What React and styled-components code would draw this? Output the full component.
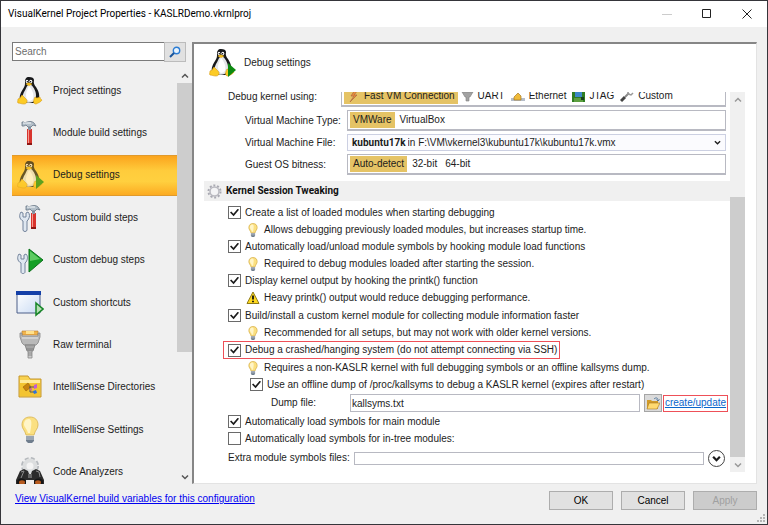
import React from 'react';
import styled, { createGlobalStyle } from 'styled-components';

const GlobalStyle = createGlobalStyle`
  * {
    box-sizing: border-box;
  }
  body {
    margin: 0;
    font-family: 'Liberation Sans', Arial, sans-serif;
    font-size: 10px;
    line-height: 12px;
    color: #1c1c1c;
  }
  button, input, select {
    font: inherit;
    color: inherit;
    padding: 0;
    margin: 0;
  }
`;

const Window = styled.div`
  position: relative;
  display: flex;
  flex-direction: column;
  height: 100vh;
  background: #f0f0f0;
  border: 1px solid #35353a;
`;

const TitleBar = styled.header`
  display: flex;
  align-items: center;
  justify-content: space-between;
  flex: none;
  height: 26px;
  padding-left: 7px;
  background: #fff;
`;

const Title = styled.h1`
  margin: 0;
  font-family: Roboto, 'Noto Sans', sans-serif;
  font-size: 10px;
  line-height: 16px;
  font-weight: 400;
  color: #000;
  white-space: nowrap;
`;

const TitleButtons = styled.div`
  display: flex;
`;

const TitleButton = styled.button`
  display: flex;
  align-items: center;
  justify-content: center;
  width: 40px;
  height: 26px;
  border: 0;
  background: none;
  color: ${props => (props.disabled ? '#ccc' : '#222')};
`;

const Main = styled.div`
  display: flex;
  flex: 1;
  min-height: 0;
  padding: 15px 10px 0 11px;
`;

const Sidebar = styled.aside`
  display: flex;
  flex-direction: column;
  flex: none;
  width: 180px;
`;

const SearchForm = styled.form`
  display: flex;
  flex: none;
  height: 20px;
  margin: 0 6px 6px 0;
`;

const SearchInput = styled.input`
  flex: 1;
  min-width: 0;
  height: 19px;
  padding: 0 2px;
  border: 1px solid #7a7a7a;
  border-right: 0;
  background: #fff;
  &::placeholder {
    color: #6d6d6d;
    opacity: 1;
  }
`;

const SearchButton = styled.button`
  display: flex;
  align-items: center;
  justify-content: center;
  width: 22px;
  height: 20px;
  border: 1px solid #bcbcbc;
  background: #e1e1e1;
`;

const NavArea = styled.div`
  display: flex;
  flex: 1;
  min-height: 0;
`;

const Nav = styled.nav`
  flex: 1;
  overflow: hidden;
`;

const NavList = styled.ul`
  display: grid;
  grid-auto-rows: 1fr;
  min-height: 426px;
  margin: 0;
  padding: 2px 0 0;
  list-style: none;
`;

const NavLink = styled.a`
  display: flex;
  align-items: center;
  gap: 9px;
  height: 41px;
  padding-left: 4px;
  color: inherit;
  text-decoration: none;
  border: 1px solid transparent;
  border-width: 1px 0;
  ${props =>
    props.$active &&
    `
    border-color: #e09a2c;
    background: linear-gradient(#fba41d 0%, #ffcc3c 38%, #ffd03f 65%, #fcab22 100%);
  `}
  svg {
    opacity: ${props => (props.$active ? 0.65 : 1)};
  }
`;

const ScrollBar = styled.div`
  display: flex;
  flex-direction: column;
  flex: none;
  width: ${props => props.$width}px;
  background: #f0f0f0;
`;

const ScrollButton = styled.button`
  display: flex;
  align-items: center;
  justify-content: center;
  flex: none;
  height: 15px;
  border: 0;
  background: none;
  color: ${props => (props.$faint ? '#999' : '#555')};
`;

const ScrollTrack = styled.div`
  display: flex;
  flex-direction: column;
  flex: 1;
`;

const ScrollSpace = styled.div`
  flex: ${props => props.$size};
`;

const ScrollThumb = styled.div`
  flex: ${props => props.$size};
  background: #cdcdcd;
`;

const Panel = styled.main`
  display: flex;
  flex-direction: column;
  flex: 1;
  min-width: 0;
  padding: 3px 11px 11px 10px;
  background: #fff;
  border: 2px solid #868686;
  border-right: 1px solid #e3e3e3;
  border-bottom: 1px solid #e3e3e3;
`;

const PanelHeader = styled.div`
  display: flex;
  align-items: center;
  gap: 8px;
  flex: none;
  height: 45px;
  padding: 0 0 13px 4px;
`;

const PanelTitle = styled.h2`
  margin: 0;
  font-size: 10px;
  font-weight: 400;
`;

const PanelBody = styled.div`
  display: flex;
  flex: 1;
  min-height: 0;
`;

const Viewport = styled.div`
  flex: 1;
  min-width: 0;
  overflow: hidden;
`;

// content is scrolled a few pixels down
const Scrolled = styled.div`
  margin-top: -6px;
`;

const Settings = styled.div`
  display: flex;
  flex-direction: column;
  gap: 3px;
  padding: 0 4px 6px 24px;
`;

const Field = styled.div`
  display: grid;
  grid-template-columns: ${props => props.$label}px 1fr;
  align-items: center;
  margin-left: ${props => props.$indent || 0}px;
`;

const Choices = styled.div`
  display: flex;
  align-items: center;
  gap: ${props => (props.$icons ? 0 : 2)}px;
  height: 21px;
  padding: 0 2px;
  border: 1px solid #b8b9c2;
  border-width: 1px 1px 2px;
`;

const Choice = styled.label`
  display: flex;
  align-items: center;
  gap: 4px;
  height: 16px;
  padding: 0 3px;
  background: ${props => (props.$on ? '#e5c365' : 'none')};
  white-space: nowrap;
`;

const ChoiceInput = styled.input`
  appearance: none;
  position: absolute;
`;

const Combo = styled.div`
  display: flex;
  align-items: center;
  height: 17px;
  padding: 0 4px;
  background: #fbfbfe;
  border: 1px solid #ccd0e2;
`;

const ComboName = styled.label`
  flex: none;
  font-family: Roboto, Arial, sans-serif;
  font-weight: 700;
`;

const ComboSelect = styled.select`
  appearance: none;
  flex: 1;
  min-width: 0;
  height: 14px;
  padding-left: 2px;
  border: 0;
  background: none;
`;

const SectionHeader = styled.h3`
  display: flex;
  align-items: center;
  gap: 4px;
  height: 20px;
  margin: 0;
  padding-left: 3px;
  background: #f0f0f0;
  font-family: Roboto, Arial, sans-serif;
  font-size: 10px;
  font-weight: 700;
  color: #111;
`;

const Options = styled.div`
  display: flex;
  flex-direction: column;
  align-items: stretch;
  padding: 3px 2px 0 24px;
`;

const CheckLabel = styled.label`
  display: flex;
  align-items: center;
  align-self: flex-start;
  gap: 4px;
  height: ${props => (props.$marked ? 18 : 17)}px;
  margin-left: ${props => (props.$nested ? 22 : 0)}px;
  white-space: nowrap;
  ${props =>
    props.$marked &&
    `
    margin-left: -5px;
    padding: 0 2px 0 4px;
    border: 1px solid #ee5058;
  `}
`;

const Check = styled.input`
  appearance: none;
  display: grid;
  place-items: center;
  flex: none;
  width: 13px;
  height: 13px;
  border: 1px solid #6a6a6a;
  background: #fff;
  &:checked::before {
    content: '';
    width: 9px;
    height: 8px;
    background: #1c1c1c;
    clip-path: polygon(0 50%, 14% 38%, 38% 66%, 86% 4%, 100% 16%, 40% 96%);
  }
`;

const Hint = styled.p`
  display: flex;
  align-items: center;
  gap: 4px;
  height: ${props => (props.$warn ? 18 : 17)}px;
  margin: 0 0 0 18px;
  white-space: nowrap;
`;

const DumpRow = styled.div`
  display: grid;
  grid-template-columns: 79px 1fr 18px 66px;
  align-items: center;
  height: 20px;
  margin-left: 43px;
`;

const ExtraRow = styled.div`
  display: grid;
  grid-template-columns: 126px 1fr 17px;
  align-items: center;
  height: 22px;
  padding-right: 3px;
`;

const TextInput = styled.input`
  min-width: 0;
  height: ${props => (props.$slim ? 13 : 18)}px;
  margin-right: 4px;
  padding: 0 1px;
  border: 1px solid #b8b9c2;
  background: #fff;
`;

const BrowseButton = styled.button`
  display: flex;
  align-items: center;
  justify-content: center;
  height: 18px;
  border: 1px solid #a5a5a5;
  background: #dadada;
`;

const UpdateLink = styled.a`
  height: 17px;
  margin-left: 1px;
  border: 1px solid #ee5058;
  line-height: 14px;
  text-align: center;
  color: #0a66cc;
`;

const ExpandButton = styled.button`
  display: flex;
  align-items: center;
  justify-content: center;
  width: 17px;
  height: 17px;
  border: 1px solid #444;
  border-radius: 50%;
  background: #fff;
`;

const Footer = styled.footer`
  display: flex;
  align-items: flex-start;
  justify-content: space-between;
  flex: none;
  height: 40px;
  padding: 7px 10px 0 14px;
`;

const VariablesLink = styled.a`
  margin-top: 2px;
  color: #0000f0;
`;

const Buttons = styled.div`
  display: flex;
  gap: 8px;
`;

const DialogButton = styled.button`
  width: 64px;
  height: 19px;
  border: 1px solid #adadad;
  background: ${props => (props.disabled ? '#ccc' : '#e1e1e1')};
  color: ${props => (props.disabled ? '#a0a0a0' : '#000')};
`;

const Grip = styled.svg`
  position: absolute;
  right: 1px;
  bottom: 1px;
`;

const Tux = ({ play }) => (
  <svg width="28" height="30" viewBox="0 0 28 30">
    <path d="M13 1c-3 0-4 2-4 5 0 3 0 4-2 7-2 3-4 7-3 11l6 3h8l5-4c1-5-1-9-3-12-3-4-2-5-2-7 0-2-2-3-5-3z" fill="#17181a" />
    <path d="M12 9c-2 2-2 4-4 7-2 4-2 7 0 9 3 3 9 2 11-1 2-4 1-9-2-13-1-2-3-3-5-2z" fill="#e4e6e9" />
    <path d="M13 10c-1 3-3 5-3 9 0 3 1 5 3 6 4 0 5-3 4-8-1-3-2-5-4-7z" fill="#fff" />
    <ellipse cx="11" cy="5.500" rx="1.300" ry="1.700" fill="#fff" />
    <ellipse cx="14.800" cy="5.500" rx="1.500" ry="1.800" fill="#fff" />
    <circle cx="11.300" cy="5.800" r=".7" />
    <circle cx="14.600" cy="5.800" r=".7" />
    <path d="M9.500 8l3-1.500 4 1.400-3.500 2z" fill="#f0b91c" />
    <path d="M6 19l4 4c2 2 1 5-2 5-3 0-4-1-6-1-1-1 0-2 0-4 1-1 2 0 2-1z" fill="#fccb25" stroke="#d99a12" strokeWidth=".6" />
    <path d="M19 21c2 2 4 0 5 0 0 2 1 2 2 3-1 2-4 3-6 4-3 0-3-3-1-7z" fill="#fccb25" stroke="#d99a12" strokeWidth=".6" />
    {play && <path d="M20 15l8 7-8 7z" fill="#0c8a10" />}
  </svg>
);

const Hammer = () => (
  <g>
    <path d="M13 11h5v15h-5z" fill="#d8342d" />
    <path d="M14 11h1v15h-1z" fill="#f59a8f" />
    <path d="M13 25h5v2h-5z" fill="#8c1713" />
    <path d="M14 7h3v5h-3z" fill="#8b98a5" />
    <path d="M8 4h2l1 1c3-2 7-2 9 0l2 3-3-1-2 2h-3l-2-2-2 1H8z" fill="#b4c0ca" stroke="#657483" strokeWidth=".8" />
    <path d="M9 5h8" stroke="#f5f8fa" />
  </g>
);

const Wrench = () => (
  <path
    d="M4 8l2 1v4h3V9l2-1c2 2 2 5 0 8l-1 1v9c0 2-4 2-4 0v-9c-4-2-4-6-2-9z"
    fill="#dfe7f0"
    stroke="#73839b"
    strokeWidth="1"
  />
);

const ModuleIcon = () => (
  <svg width="28" height="30" viewBox="0 0 28 30">
    <g transform="translate(-2 0)"><Hammer /></g>
  </svg>
);

const BuildIcon = () => (
  <svg width="28" height="30" viewBox="0 0 28 30">
    <g transform="translate(2 -1)"><Hammer /></g>
    <g transform="translate(1 1)"><Wrench /></g>
  </svg>
);

const StepsIcon = () => (
  <svg width="28" height="30" viewBox="0 0 28 30">
    <g transform="translate(-1 1)"><Wrench /></g>
    <path d="M13 4l14 11-14 12z" fill="#14a026" stroke="#0b701b" />
    <path d="M14 6l10 8-10 2z" fill="#5ecb62" />
  </svg>
);

const ShortcutIcon = () => (
  <svg width="28" height="30" viewBox="0 0 28 30">
    <defs>
      <linearGradient id="win" x2="1" y2="1">
        <stop stopColor="#fff" /><stop offset="1" stopColor="#cadbf4" />
      </linearGradient>
    </defs>
    <path d="M1 4h23v21H1z" fill="url(#win)" stroke="#4d5f88" />
    <path d="M0 3h25v4H0z" fill="#1440a8" />
    <path d="M20 15l7 6-7 6z" fill="#b5dfb3" stroke="#158525" strokeWidth="1.500" />
  </svg>
);

const TerminalIcon = () => (
  <svg width="28" height="30" viewBox="0 0 28 30">
    <path d="M6 1h16v4H6z" fill="#f2b44c" stroke="#b77a28" strokeWidth=".6" />
    <path d="M10 1h8v3h-8z" fill="#ffe18c" />
    <path d="M4 3h2v3h16V3h2v4l-2 6-2 2H8l-2-2-2-6z" fill="#b9b9b9" stroke="#858585" strokeWidth=".8" />
    <path d="M6 8h16" stroke="#e8e8e8" />
    <path d="M9 15h10l-2 6h-6z" fill="#a6a6a6" stroke="#7d7d7d" strokeWidth=".8" />
    <path d="M12 21h4v7h-4z" fill="#ccc" stroke="#888" strokeWidth=".8" />
    <path d="M10 19h8M12 23h4M12 25h4" stroke="#777" strokeWidth=".8" />
  </svg>
);

const DirectoriesIcon = () => (
  <svg width="28" height="30" viewBox="0 0 28 30">
    <path d="M3 4h9l2 3h11v18H3z" fill="#f8d251" stroke="#c5962d" />
    <path d="M4 9h20v15H4z" fill="#f3c431" />
    <path d="M4 8h20v3H4z" fill="#ffeb9b" />
    <path d="M7 15l5-4 3 4-5 4z" fill="#c88410" stroke="#98600a" strokeWidth=".6" />
    <path d="M13 15h6M14 15v5h5" fill="none" stroke="#555" />
    <path d="M18 13l3-1v4l-3 1z" fill="#c45ad4" />
    <path d="M17 19l3-1 1 3-3 1z" fill="#2f72dc" />
    <path d="M13 17l3-1v3z" fill="#da62a5" />
  </svg>
);

const BulbIcon = ({ small }) => (
  <svg
    width={small ? 14 : 28}
    height={small ? 14 : 30}
    viewBox={small ? '1 1 26 27' : '0 0 28 30'}
  >
    <path d="M14 2c-5 0-8 3-8 8 0 4 3 5 4 10h8c1-5 4-6 4-10 0-5-3-8-8-8z" fill="#fbe081" stroke="#d8b34d" strokeWidth={small ? 1.5 : 0.8} />
    <path d="M13 4c-4 0-5 3-5 6 1 3 3 4 4 8h2c1-5 3-14-1-14z" fill="#fff5c8" />
    <path d="M10 21h8v5l-2 2h-4l-2-2z" fill="#6f7d8d" />
    <path d="M10 22h8M10 24h8" stroke="#c9d1da" />
  </svg>
);

const AnalyzerIcon = () => (
  <svg width="28" height="30" viewBox="0 0 28 30">
    <circle cx="14" cy="9" r="6" fill="none" stroke="#b5b9bd" strokeWidth="6" strokeDasharray="3 1.700" />
    <circle cx="14" cy="9" r="5.500" fill="#f4f4f4" stroke="#dcdedf" strokeWidth="4" />
    <path d="M4 14l4-2 4 2 1 3h2l1-3 4-2 4 2 4 9v5h-10v-5h-8v5H0v-5z" fill="#2b2b2b" />
    <path d="M5 15l3-1-3 7M20 14l3 1 1 5" fill="none" stroke="#8a8a8a" />
    <ellipse cx="5.500" cy="25" rx="4.500" ry="3.500" fill="#151515" />
    <ellipse cx="22.500" cy="25" rx="4.500" ry="3.500" fill="#151515" />
    <ellipse cx="6" cy="25.500" rx="3" ry="2.200" fill="#b75b20" />
    <ellipse cx="22" cy="25.500" rx="3" ry="2.200" fill="#b75b20" />
    <path d="M12 17h4v4h-4z" fill="#666" />
  </svg>
);

const SearchIcon = () => (
  <svg width="12" height="12" viewBox="0 0 12 12" fill="none">
    <circle cx="7.500" cy="4.500" r="3.200" fill="#e8f3fd" stroke="#2b7cd3" strokeWidth="1.400" />
    <path d="M5 7l-4 4" stroke="#17539b" strokeWidth="2" />
  </svg>
);

const Chevron = ({ up, size = 8, weight = 1.5 }) => (
  <svg width={size} height={size} viewBox="0 0 8 8" fill="none" stroke="currentColor" strokeWidth={weight}>
    <path d={up ? 'M1 5.500l3-3 3 3' : 'M1 2.500l3 3 3-3'} />
  </svg>
);

const Warning = () => (
  <svg width="14" height="14" viewBox="0 0 14 14">
    <path d="M7 1l6 11.500H1z" fill="#ffd91f" stroke="#8f7a16" strokeLinejoin="round" />
    <path d="M7 4.500v4M7 9.800v1.500" stroke="#111" strokeWidth="1.800" />
  </svg>
);

const GearIcon = () => (
  <svg width="15" height="15" viewBox="0 0 15 15" fill="none">
    <circle cx="7.500" cy="7.500" r="6" stroke="#a9a9b2" strokeWidth="2" strokeDasharray="2 1.770" />
    <circle cx="7.500" cy="7.500" r="4.500" stroke="#b9b9c0" strokeWidth="1.500" />
    <circle cx="7.500" cy="7.500" r="3.200" fill="#f4f4f6" />
  </svg>
);

const BoltIcon = () => (
  <svg width="13" height="14" viewBox="0 0 13 14">
    <path d="M8 1L4 7h3L3 13l7-7H7l4-5z" fill="#ee8d3a" stroke="#b16d44" strokeWidth=".8" />
  </svg>
);

const UartIcon = () => (
  <svg width="13" height="14" viewBox="0 0 13 14">
    <path d="M1 3h11l-3 5H8v4H5V8H4z" fill="#a2a2a2" stroke="#818181" strokeWidth=".6" />
  </svg>
);

const EthernetIcon = () => (
  <svg width="14" height="14" viewBox="0 0 14 14">
    <path d="M0 9h14v3H0z" fill="#b6bdc9" />
    <path d="M3 11V8l4-4 3 3v4z" fill="#f0bb3a" stroke="#a57927" strokeWidth=".7" />
  </svg>
);

const JtagIcon = () => (
  <svg width="13" height="14" viewBox="0 0 13 14">
    <path d="M0 1h13v12H0z" fill="#2f7d22" />
    <path d="M3 3h7v5H3z" fill="#3d87c7" />
    <path d="M2 10h9M2 12h9" stroke="#8cc25e" />
    <path d="M9 8h3v3H9z" fill="#16401a" />
  </svg>
);

const CustomIcon = () => (
  <svg width="14" height="14" viewBox="0 0 14 14" fill="none">
    <path d="M1 12l4-4" stroke="#444" strokeWidth="3" />
    <path d="M5 8l4-4" stroke="#888" strokeWidth="2" />
    <path d="M8 2v3l3 1 2-2" stroke="#999" strokeWidth="1.500" />
  </svg>
);

const FolderIcon = () => (
  <svg width="14" height="13" viewBox="0 0 14 13">
    <path d="M1 3h4l1 1h6v8H1z" fill="#d19a28" />
    <path d="M3 6h11l-3 6H1z" fill="#ffda70" stroke="#a87a22" strokeWidth=".6" />
    <path d="M8 2c2-2 4-1 4 1M10.500 2.500L12 4l1.500-1.500" fill="none" stroke="#55799f" />
  </svg>
);

const navItems = [
  { text: 'Project settings', icon: <Tux /> },
  { text: 'Module build settings', icon: <ModuleIcon /> },
  { text: 'Debug settings', icon: <Tux play />, active: true },
  { text: 'Custom build steps', icon: <BuildIcon /> },
  { text: 'Custom debug steps', icon: <StepsIcon /> },
  { text: 'Custom shortcuts', icon: <ShortcutIcon /> },
  { text: 'Raw terminal', icon: <TerminalIcon /> },
  { text: 'IntelliSense Directories', icon: <DirectoriesIcon /> },
  { text: 'IntelliSense Settings', icon: <BulbIcon /> },
  { text: 'Code Analyzers', icon: <AnalyzerIcon /> },
];

const transports = [
  { text: 'Fast VM Connection', icon: <BoltIcon /> },
  { text: 'UART', icon: <UartIcon /> },
  { text: 'Ethernet', icon: <EthernetIcon /> },
  { text: 'JTAG', icon: <JtagIcon /> },
  { text: 'Custom', icon: <CustomIcon /> },
];

const options = [
  {
    text: 'Create a list of loaded modules when starting debugging',
    hint: 'Allows debugging previously loaded modules, but increases startup time.',
  },
  {
    text: 'Automatically load/unload module symbols by hooking module load functions',
    hint: 'Required to debug modules loaded after starting the session.',
  },
  {
    text: 'Display kernel output by hooking the printk() function',
    hint: 'Heavy printk() output would reduce debugging performance.',
    warn: true,
  },
  {
    text: 'Build/install a custom kernel module for collecting module information faster',
    hint: 'Recommended for all setups, but may not work with older kernel versions.',
  },
  {
    text: 'Debug a crashed/hanging system (do not attempt connecting via SSH)',
    hint: 'Requires a non-KASLR kernel with full debugging symbols or an offline kallsyms dump.',
    marked: true,
  },
];

const ChoiceGroup = ({ name, label, items, icons }) => (
  <Choices role="radiogroup" aria-label={label} $icons={icons}>
    {items.map((item, i) => (
      <Choice key={item.text} $on={i === 0}>
        <ChoiceInput type="radio" name={name} defaultChecked={i === 0} />
        {item.icon}
        {item.text}
      </Choice>
    ))}
  </Choices>
);

const Scroller = ({ width, faint, before, thumb, after }) => (
  <ScrollBar $width={width}>
    <ScrollButton $faint={faint} aria-label="Scroll up"><Chevron up /></ScrollButton>
    <ScrollTrack>
      <ScrollSpace $size={before} />
      <ScrollThumb $size={thumb} />
      <ScrollSpace $size={after} />
    </ScrollTrack>
    <ScrollButton $faint={faint} aria-label="Scroll down"><Chevron /></ScrollButton>
  </ScrollBar>
);

const App = () => (
  <>
    <GlobalStyle />
    <Window>
      <TitleBar>
        <Title>VisualKernel Project Properties - KASLRDemo.vkrnlproj</Title>
        <TitleButtons>
          <TitleButton disabled aria-label="Minimize">
            <svg width="10" height="10" stroke="currentColor"><path d="M0 5.500h10" /></svg>
          </TitleButton>
          <TitleButton aria-label="Maximize">
            <svg width="10" height="10" fill="none" stroke="currentColor"><path d="M.5 .5h8v8h-8z" /></svg>
          </TitleButton>
          <TitleButton aria-label="Close">
            <svg width="10" height="10" stroke="currentColor"><path d="M.5 .5l9 9M9.500 .5l-9 9" /></svg>
          </TitleButton>
        </TitleButtons>
      </TitleBar>
      <Main>
        <Sidebar>
          <SearchForm>
            <SearchInput type="text" placeholder="Search" aria-label="Search" />
            <SearchButton type="button" aria-label="Find"><SearchIcon /></SearchButton>
          </SearchForm>
          <NavArea>
            <Nav>
              <NavList>
                {navItems.map(item => (
                  <li key={item.text}>
                    <NavLink href="#" $active={item.active}>
                      {item.icon}
                      {item.text}
                    </NavLink>
                  </li>
                ))}
              </NavList>
            </Nav>
            <Scroller width={15} before={0} thumb={270} after={117} />
          </NavArea>
        </Sidebar>
        <Panel>
          <PanelHeader>
            <Tux play />
            <PanelTitle>Debug settings</PanelTitle>
          </PanelHeader>
          <PanelBody>
            <Viewport>
              <Scrolled>
                <Settings>
                  <Field $label={113}>
                    <span>Debug kernel using:</span>
                    <ChoiceGroup name="transport" label="Debug kernel using" items={transports} icons />
                  </Field>
                  <Field $label={102} $indent={17}>
                    <span>Virtual Machine Type:</span>
                    <ChoiceGroup
                      name="vmType"
                      label="Virtual Machine Type"
                      items={[{ text: 'VMWare' }, { text: 'VirtualBox' }]}
                    />
                  </Field>
                  <Field $label={102} $indent={17}>
                    <label htmlFor="vmFile">Virtual Machine File:</label>
                    <Combo>
                      <ComboName htmlFor="vmFile">kubuntu17k</ComboName>
                      <ComboSelect id="vmFile">
                        <option>{'in F:\\VM\\vkernel3\\kubuntu17k\\kubuntu17k.vmx'}</option>
                      </ComboSelect>
                      <Chevron size={7} />
                    </Combo>
                  </Field>
                  <Field $label={102} $indent={17}>
                    <span>Guest OS bitness:</span>
                    <ChoiceGroup
                      name="bitness"
                      label="Guest OS bitness"
                      items={[{ text: 'Auto-detect' }, { text: '32-bit' }, { text: '64-bit' }]}
                    />
                  </Field>
                </Settings>
                <SectionHeader>
                  <GearIcon />
                  Kernel Session Tweaking
                </SectionHeader>
                <Options>
                  {options.map(option => (
                    <React.Fragment key={option.text}>
                      <CheckLabel $marked={option.marked}>
                        <Check type="checkbox" defaultChecked />
                        {option.text}
                      </CheckLabel>
                      <Hint $warn={option.warn}>
                        {option.warn ? <Warning /> : <BulbIcon small />}
                        {option.hint}
                      </Hint>
                    </React.Fragment>
                  ))}
                  <CheckLabel $nested>
                    <Check type="checkbox" defaultChecked />
                    Use an offline dump of /proc/kallsyms to debug a KASLR kernel (expires after restart)
                  </CheckLabel>
                  <DumpRow>
                    <label htmlFor="dump">Dump file:</label>
                    <TextInput id="dump" type="text" defaultValue="kallsyms.txt" />
                    <BrowseButton aria-label="Browse"><FolderIcon /></BrowseButton>
                    <UpdateLink href="#">create/update</UpdateLink>
                  </DumpRow>
                  <CheckLabel>
                    <Check type="checkbox" defaultChecked />
                    Automatically load symbols for main module
                  </CheckLabel>
                  <CheckLabel>
                    <Check type="checkbox" />
                    Automatically load symbols for in-tree modules:
                  </CheckLabel>
                  <ExtraRow>
                    <label htmlFor="extra">Extra module symbols files:</label>
                    <TextInput id="extra" type="text" $slim />
                    <ExpandButton aria-label="Expand"><Chevron size={9} weight={2} /></ExpandButton>
                  </ExtraRow>
                </Options>
              </Scrolled>
            </Viewport>
            <Scroller width={15} faint before={90} thumb={260} after={0} />
          </PanelBody>
        </Panel>
      </Main>
      <Footer>
        <VariablesLink href="#">View VisualKernel build variables for this configuration</VariablesLink>
        <Buttons>
          <DialogButton>OK</DialogButton>
          <DialogButton>Cancel</DialogButton>
          <DialogButton disabled>Apply</DialogButton>
        </Buttons>
      </Footer>
      <Grip width="10" height="10" fill="#b5b5b5">
        <path d="M7 1h2v2h-2zM4 4h2v2h-2zM7 4h2v2h-2zM1 7h2v2h-2zM4 7h2v2h-2zM7 7h2v2h-2z" />
      </Grip>
    </Window>
  </>
);

export default App;
